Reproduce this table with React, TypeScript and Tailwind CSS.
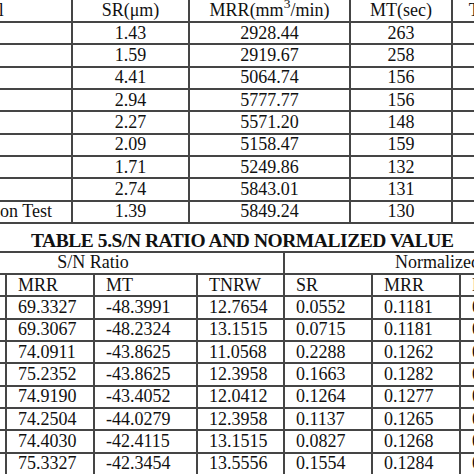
const topRows = [
  ["1", "1.43", "2928.44", "263"],
  ["2", "1.59", "2919.67", "258"],
  ["3", "4.41", "5064.74", "156"],
  ["4", "2.94", "5777.77", "156"],
  ["5", "2.27", "5571.20", "148"],
  ["6", "2.09", "5158.47", "159"],
  ["7", "1.71", "5249.86", "132"],
  ["8", "2.74", "5843.01", "131"],
  ["Confirmation Test", "1.39", "5849.24", "130"],
]

const snRows = [
  ["", "69.3327", "-48.3991", "12.7654", "0.0552", "0.1181", "0.0", ""],
  ["", "69.3067", "-48.2324", "13.1515", "0.0715", "0.1181", "0.0", ""],
  ["", "74.0911", "-43.8625", "11.0568", "0.2288", "0.1262", "0.0", ""],
  ["", "75.2352", "-43.8625", "12.3958", "0.1663", "0.1282", "0.0", ""],
  ["", "74.9190", "-43.4052", "12.0412", "0.1264", "0.1277", "0.0", ""],
  ["", "74.2504", "-44.0279", "12.3958", "0.1137", "0.1265", "0.0", ""],
  ["", "74.4030", "-42.4115", "13.1515", "0.0827", "0.1268", "0.0", ""],
  ["", "75.3327", "-42.3454", "13.5556", "0.1554", "0.1284", "0.0", ""],
]

const topCell = "flex items-center justify-center whitespace-nowrap border-r-2 border-b-2 border-[#454545]"
const snCell = "flex items-center pl-[11px] whitespace-nowrap border-r-2 border-b-2 border-[#454545]"

function TopTable() {
  return (
    <div className="ml-[-98px] grid w-max grid-cols-[171px_117px_161px_102px_153px]">
      <div className={`${topCell} h-[23px]`}>Trial</div>
      <div className={`${topCell} h-[23px]`}>SR(μm)</div>
      <div className={`${topCell} h-[23px]`}>
        MRR(mm<sup>3</sup>/min)
      </div>
      <div className={`${topCell} h-[23px]`}>MT(sec)</div>
      <div className={`${topCell} h-[23px]`}>
        TWR(mm<sup>3</sup>/min)
      </div>
      {topRows.map((row, i) => (
        <div key={i} className="contents">
          {row.map((v, j) => (
            <div key={j} className={`${topCell} h-[22.33px]`}>
              {v}
            </div>
          ))}
          <div className={`${topCell} h-[22.33px]`}></div>
        </div>
      ))}
    </div>
  )
}

function SnTable() {
  return (
    <div className="ml-[-97px] grid w-max grid-cols-[104px_88px_103px_87px_88px_88px_88px_88px] border-t-2 border-[#454545]">
      <div className={`${topCell} col-span-4 h-[22.33px]`}>S/N Ratio</div>
      <div className={`${topCell} col-span-4 h-[22.33px]`}>Normalized Value</div>
      {["SR", "MRR", "MT", "TNRW", "SR", "MRR", "MT", "TNRW"].map((h, i) => (
        <div key={i} className={`${snCell} h-[22.33px]`}>
          {h}
        </div>
      ))}
      {snRows.map((row, i) => (
        <div key={i} className="contents">
          {row.map((v, j) => (
            <div key={j} className={`${snCell} h-[22.33px]`}>
              {v}
            </div>
          ))}
        </div>
      ))}
    </div>
  )
}

export default function App() {
  return (
    <div className="h-[474px] w-[474px] overflow-hidden bg-white font-['Liberation_Serif',serif] text-[18px] text-[#111]">
      <TopTable />
      <div className="h-[26.7px] whitespace-nowrap pl-[31px] pt-[7px] text-[19.5px] font-bold leading-none tracking-[-0.45px]">
        TABLE 5.S/N RATIO AND NORMALIZED VALUE
      </div>
      <SnTable />
    </div>
  )
}
